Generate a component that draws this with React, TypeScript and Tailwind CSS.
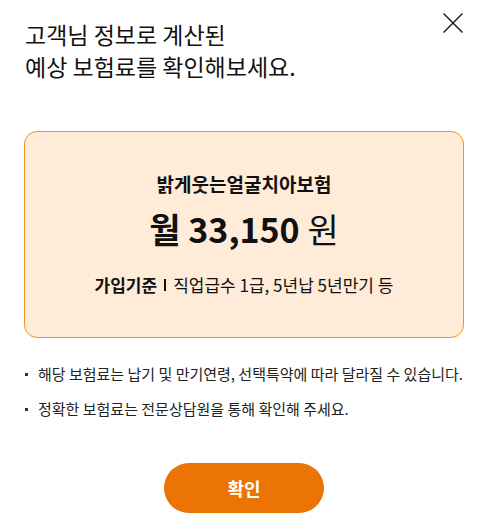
import React from "react";

export default function App() {
  return (
    <div
      className="relative w-[488px] h-[527px] bg-white text-[#111]"
      style={{ fontFamily: '"Noto Sans CJK KR", "Noto Sans", sans-serif' }}
    >
      <button className="absolute left-[443px] top-[13px] w-[20px] h-[20px]" aria-label="닫기">
        <svg viewBox="0 0 20 20" width="20" height="20">
          <path d="M0.5 0.5 L19.5 19.5 M19.5 0.5 L0.5 19.5" stroke="#222" strokeWidth="1.5" fill="none" />
        </svg>
      </button>
      <div className="px-[24px] pt-[18px]">
        <h1 className="text-[23px] leading-[32px] font-normal pl-[1px]">
          고객님 정보로 계산된
          <br />
          예상 보험료를 확인해보세요.
        </h1>
        <div className="mt-[49px] h-[207px] rounded-[13px] border border-[#f4931f] bg-[#feebd8] flex flex-col items-center pt-[39px]">
          <div className="text-[19px] leading-[26px] font-bold">밝게웃는얼굴치아보험</div>
          <div className="mt-[10px] text-[34px] leading-[44px] font-bold">
            월 33,150 <span className="font-normal">원</span>
          </div>
          <div className="mt-[22px] text-[17px] leading-[24px] flex items-center">
            <span className="font-bold">가입기준</span>
            <span className="mx-[7px] inline-block w-[2px] h-[12px] bg-[#111]" />
            <span>직업급수 1급, 5년납 5년만기 등</span>
          </div>
        </div>
        <ul className="mt-[26px] text-[15px] leading-[20px] text-[#222]">
          <li className="flex items-start">
            <span className="shrink-0 w-[3px] h-[3px] bg-[#333] mt-[9px] ml-[1px] mr-[10px]" />
            <span>해당 보험료는 납기 및 만기연령, 선택특약에 따라 달라질 수 있습니다.</span>
          </li>
          <li className="flex items-start mt-[15px]">
            <span className="shrink-0 w-[3px] h-[3px] bg-[#333] mt-[9px] ml-[1px] mr-[10px]" />
            <span>정확한 보험료는 전문상담원을 통해 확인해 주세요.</span>
          </li>
        </ul>
        <div className="mt-[44px] flex justify-center">
          <button className="w-[160px] h-[50px] rounded-full bg-[#ec7405] text-white text-[18px] font-bold">
            확인
          </button>
        </div>
      </div>
    </div>
  );
}
